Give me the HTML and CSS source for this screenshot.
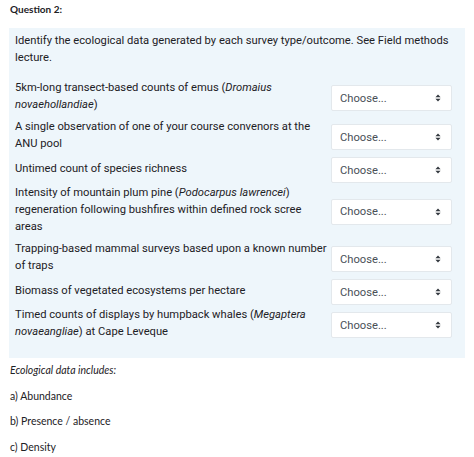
FILE: index.html
```html
<!DOCTYPE html>
<html lang="en">
<head>
    <meta charset="UTF-8">
    <meta name="viewport" content="width=device-width, initial-scale=1.0">
    <title>Question 2</title>
    <link rel="stylesheet" href="styles.css">
</head>
<body>
    <h3 class="qno">Question 2:</h3>

    <div class="formulation">
        <p class="qtext">Identify the ecological data generated by each survey type/outcome. See Field methods lecture.</p>

        <div class="answer">
            <div class="match-row">
                <div class="stem">5km-long transect-based counts of emus (<em>Dromaius novaehollandiae</em>)</div>
                <div class="control">
                    <select><option>Choose...</option></select>
                    <svg class="arrows" width="6" height="8" viewBox="0 0 6 8"><path d="M3 0.5 L5.6 3.2 H0.4 Z M3 7.5 L5.6 4.8 H0.4 Z" fill="#343a40"/></svg>
                </div>
            </div>
            <div class="match-row">
                <div class="stem">A single observation of one of your course convenors at the ANU pool</div>
                <div class="control">
                    <select><option>Choose...</option></select>
                    <svg class="arrows" width="6" height="8" viewBox="0 0 6 8"><path d="M3 0.5 L5.6 3.2 H0.4 Z M3 7.5 L5.6 4.8 H0.4 Z" fill="#343a40"/></svg>
                </div>
            </div>
            <div class="match-row">
                <div class="stem">Untimed count of species richness</div>
                <div class="control">
                    <select><option>Choose...</option></select>
                    <svg class="arrows" width="6" height="8" viewBox="0 0 6 8"><path d="M3 0.5 L5.6 3.2 H0.4 Z M3 7.5 L5.6 4.8 H0.4 Z" fill="#343a40"/></svg>
                </div>
            </div>
            <div class="match-row">
                <div class="stem">Intensity of mountain plum pine (<em>Podocarpus lawrencei</em>) regeneration following bushfires within defined rock scree areas</div>
                <div class="control">
                    <select><option>Choose...</option></select>
                    <svg class="arrows" width="6" height="8" viewBox="0 0 6 8"><path d="M3 0.5 L5.6 3.2 H0.4 Z M3 7.5 L5.6 4.8 H0.4 Z" fill="#343a40"/></svg>
                </div>
            </div>
            <div class="match-row">
                <div class="stem">Trapping-based mammal surveys based upon a known number of traps</div>
                <div class="control">
                    <select><option>Choose...</option></select>
                    <svg class="arrows" width="6" height="8" viewBox="0 0 6 8"><path d="M3 0.5 L5.6 3.2 H0.4 Z M3 7.5 L5.6 4.8 H0.4 Z" fill="#343a40"/></svg>
                </div>
            </div>
            <div class="match-row">
                <div class="stem">Biomass of vegetated ecosystems per hectare</div>
                <div class="control">
                    <select><option>Choose...</option></select>
                    <svg class="arrows" width="6" height="8" viewBox="0 0 6 8"><path d="M3 0.5 L5.6 3.2 H0.4 Z M3 7.5 L5.6 4.8 H0.4 Z" fill="#343a40"/></svg>
                </div>
            </div>
            <div class="match-row">
                <div class="stem">Timed counts of displays by humpback whales (<em>Megaptera novaeangliae</em>) at Cape Leveque</div>
                <div class="control">
                    <select><option>Choose...</option></select>
                    <svg class="arrows" width="6" height="8" viewBox="0 0 6 8"><path d="M3 0.5 L5.6 3.2 H0.4 Z M3 7.5 L5.6 4.8 H0.4 Z" fill="#343a40"/></svg>
                </div>
            </div>
        </div>
    </div>

    <div class="notes">
        <p><em>Ecological data includes:</em></p>
        <p>a) Abundance</p>
        <p>b) Presence / absence</p>
        <p>c) Density</p>
    </div>
</body>
</html>
```

FILE: styles.css
```css
body {
    margin: 0;
    padding: 0 9px;
    font-family: Roboto, "Noto Sans", sans-serif;
    color: #1d2125;
    background: #fff;
}
.qno {
    font-family: Lato, "Liberation Sans", sans-serif;
    font-weight: bold;
    font-size: 10px;
    line-height: 14px;
    margin: 2px 0 0 1px;
    padding: 0;
}
.formulation {
    background-color: #eef6fb;
    margin-top: 12px;
    padding: 4px 13px 14px 6px;
    font-size: 11.2px;
    line-height: 17px;
}
.qtext {
    margin: 0 0 13px 0;
}
.answer {
    display: flex;
    flex-direction: column;
    gap: 1px;
}
.match-row {
    display: flex;
    align-items: center;
}
.stem {
    width: 312px;
    padding-bottom: 4px;
}
.match-row.single .stem {
    padding-bottom: 6px;
}
.control {
    position: relative;
    margin-left: auto;
}
select {
    -webkit-appearance: none;
    appearance: none;
    display: block;
    width: 121px;
    height: 26px;
    padding: 0 20px 0 8px;
    font-family: inherit;
    font-size: 11.2px;
    color: #495057;
    background: #fff;
    border: 1px solid #e3e8ec;
    border-radius: 2px;
}
.arrows {
    position: absolute;
    right: 11px;
    top: 9px;
    pointer-events: none;
}
.notes {
    font-family: Lato, "Liberation Sans", sans-serif;
    font-size: 10.5px;
    line-height: 14px;
    color: #1d2125;
    padding-left: 1px;
}
.notes p {
    margin: 5px 0 11.5px 0;
}
```
